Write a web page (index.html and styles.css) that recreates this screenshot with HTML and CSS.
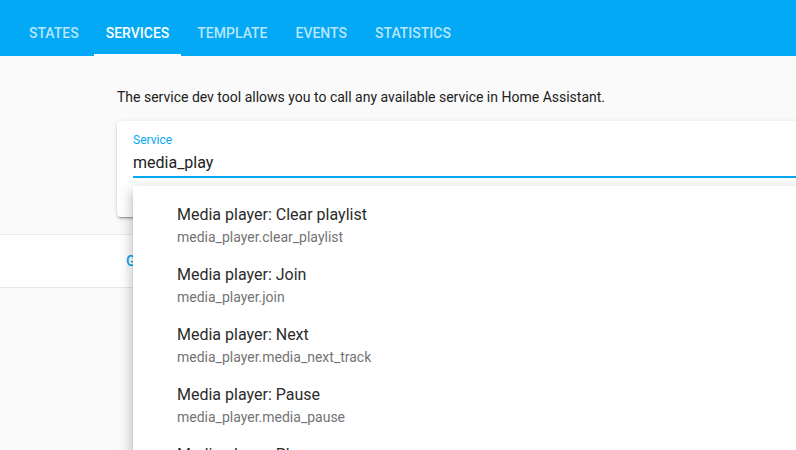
FILE: index.html
```html
<!DOCTYPE html>
<html>
<head>
<meta charset="utf-8">
<link rel="stylesheet" href="styles.css">
</head>
<body>
<header class="toolbar">
  <nav class="tabs">
    <div class="tab first">States</div>
    <div class="tab active">Services</div>
    <div class="tab">Template</div>
    <div class="tab">Events</div>
    <div class="tab">Statistics</div>
  </nav>
</header>
<main class="content">
  <div class="inner">
    <p class="intro">The service dev tool allows you to call any available service in Home Assistant.</p>
    <div class="card">
      <div class="field">
        <div class="label">Service</div>
        <div class="input">media_play</div>
      </div>
      <ul class="dropdown">
        <li class="item"><div class="title">Media player: Clear playlist</div><div class="sub">media_player.clear_playlist</div></li>
        <li class="item"><div class="title">Media player: Join</div><div class="sub">media_player.join</div></li>
        <li class="item"><div class="title">Media player: Next</div><div class="sub">media_player.media_next_track</div></li>
        <li class="item"><div class="title">Media player: Pause</div><div class="sub">media_player.media_pause</div></li>
        <li class="item"><div class="title">Media player: Play</div><div class="sub">media_player.media_play</div></li>
      </ul>
    </div>
  </div>
  <div class="band">
    <span class="btn">Go to YAML mode</span>
  </div>
</main>
</body>
</html>
```
FILE: styles.css
```css
html, body {
  margin: 0;
  padding: 0;
  width: 796px;
  height: 450px;
  overflow: hidden;
  background: #fafafa;
  font-family: Roboto, "Noto Sans", sans-serif;
  color: #212121;
}
.toolbar {
  height: 56px;
  background: #03a9f4;
  display: flex;
  align-items: stretch;
}
.tabs {
  display: flex;
  gap: 4px;
  padding-left: 17px;
}
.tab {
  padding: 12px 12px 0;
  display: flex;
  align-items: center;
  font-size: 14px;
  font-weight: 500;
  text-transform: uppercase;
  color: rgba(255,255,255,0.72);
  box-sizing: border-box;
  border-bottom: 2px solid transparent;
}
.tab.first {
  padding-right: 11px;
}
.tab.active {
  color: #ffffff;
  border-bottom-color: #ffffff;
}
.content {
  display: flex;
  flex-direction: column;
}
.inner {
  padding-left: 117px;
}
.intro {
  margin: 31px 0 14px;
  font-size: 14px;
  line-height: 20px;
  color: #212121;
}
.card {
  position: relative;
  width: 760px;
  height: 96px;
  background: #fff;
  border-radius: 4px;
  box-shadow: 0 2px 2px 0 rgba(0,0,0,0.14), 0 1px 5px 0 rgba(0,0,0,0.12), 0 3px 1px -2px rgba(0,0,0,0.2);
  padding: 11px 16px 0;
  box-sizing: border-box;
}
.field {
  border-bottom: 2px solid #03a9f4;
}
.label {
  font-size: 12px;
  line-height: 16px;
  color: #03a9f4;
}
.input {
  margin-top: 3px;
  font-size: 16px;
  line-height: 24px;
  padding-bottom: 1px;
  color: #212121;
}
.dropdown {
  position: absolute;
  left: 16px;
  top: 65px;
  width: 720px;
  height: 300px;
  margin: 0;
  padding: 9px 0 0;
  list-style: none;
  background: #fff;
  z-index: 2;
  box-shadow: 0 8px 10px 1px rgba(0,0,0,0.14), 0 3px 14px 2px rgba(0,0,0,0.12), 0 5px 5px -3px rgba(0,0,0,0.2);
}
.item {
  height: 60px;
  padding: 8px 16px 8px 44px;
  box-sizing: border-box;
}
.title {
  font-size: 16px;
  line-height: 24px;
  color: #2b2b2b;
}
.sub {
  font-size: 14px;
  line-height: 20px;
  color: #737373;
}
.band {
  margin-top: 17px;
  height: 52px;
  background: #fff;
  border-top: 1px solid #ececec;
  border-bottom: 1px solid #e6e6e6;
  display: flex;
  align-items: center;
  padding-left: 126px;
}
.btn {
  font-size: 14px;
  font-weight: 500;
  text-transform: uppercase;
  color: #03a9f4;
}
```
